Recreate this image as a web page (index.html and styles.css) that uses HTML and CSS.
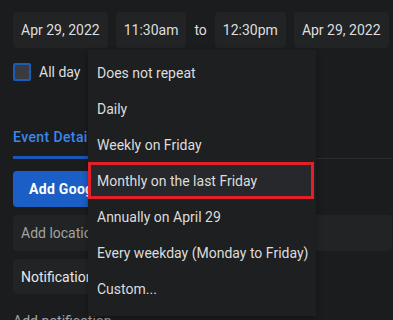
FILE: index.html
```html
<!DOCTYPE html>
<html lang="en">
<head>
    <meta charset="UTF-8">
    <meta name="viewport" content="width=device-width, initial-scale=1.0">
    <title>Event</title>
    <link rel="stylesheet" href="styles.css">
</head>
<body>
    <div class="page">
        <div class="time-row">
            <div class="field">Apr 29, 2022</div>
            <div class="field">11:30am</div>
            <span class="to">to</span>
            <div class="field">12:30pm</div>
            <div class="field">Apr 29, 2022</div>
        </div>

        <label class="allday">
            <span class="checkbox"></span>
            <span>All day</span>
        </label>

        <div class="tabs">
            <div class="tab active">Event Details</div>
        </div>

        <button class="meet-btn">Add Google Meet video conferencing</button>

        <div class="field location">Add location</div>
        <div class="field notification">Notification</div>
        <div class="add-notif">Add notification</div>
    </div>

    <ul class="repeat-menu">
        <li>Does not repeat</li>
        <li>Daily</li>
        <li>Weekly on Friday</li>
        <li class="selected">Monthly on the last Friday</li>
        <li>Annually on April 29</li>
        <li>Every weekday (Monday to Friday)</li>
        <li>Custom...</li>
    </ul>
</body>
</html>
```

FILE: styles.css
```css
* {
    margin: 0;
    padding: 0;
    box-sizing: border-box;
}

body {
    background-color: #1b1c1e;
    color: #e3e3e3;
    font-family: Roboto, "Noto Sans", sans-serif;
    font-size: 14px;
    line-height: 16px;
    height: 320px;
    overflow: hidden;
}

.page {
    padding: 12px 1px 0 13px;
}

.time-row {
    display: flex;
    align-items: center;
    gap: 8px;
}

.field {
    display: flex;
    align-items: center;
    height: 36px;
    padding: 0 8px;
    background-color: #212325;
    border-radius: 4px;
    color: #dedede;
}

.to {
    color: #dedede;
}

/* Toute la journée */
.allday {
    display: flex;
    align-items: center;
    gap: 8px;
    height: 32px;
    margin-top: 8px;
    color: #dedede;
}

.checkbox {
    width: 18px;
    height: 18px;
    border: 2px solid #1b5cb8;
    border-radius: 2px;
    background-color: #3a3b3e;
}

/* Onglets */
.tabs {
    display: flex;
    margin-top: 28px;
    border-bottom: 1px solid #2b2c2f;
}

.tab {
    padding: 13px 0 11px;
    margin-bottom: -1px;
    font-weight: 500;
    letter-spacing: 0.4px;
}

.tab.active {
    color: #3b87ee;
    border-bottom: 3px solid #1a56b4;
}

.meet-btn {
    display: block;
    height: 36px;
    margin-top: 12px;
    padding: 0 16px;
    border: none;
    border-radius: 4px;
    background-color: #1b5ec6;
    color: #fff;
    font-family: inherit;
    font-size: 14px;
    font-weight: 700;
    letter-spacing: 0.3px;
}

.location {
    margin-top: 8px;
    color: #a3a3a3;
}

.notification {
    width: 150px;
    height: 35px;
    margin-top: 8px;
    color: #e8e8e8;
}

.add-notif {
    margin-top: 19px;
    color: #a3a3a3;
}

/* Menu de répétition */
.repeat-menu {
    position: absolute;
    left: 88px;
    top: 50px;
    width: 228px;
    height: 266px;
    padding: 5px 0 9px;
    list-style: none;
    background-color: #1e1f21;
    box-shadow: 0 2px 6px rgba(0, 0, 0, 0.35);
}

.repeat-menu li {
    display: flex;
    align-items: center;
    height: 36px;
    padding-left: 9px;
    color: #dcdcdc;
}

.repeat-menu li.selected {
    height: 37px;
    margin-top: -1px;
    margin-right: 2px;
    padding-left: 6px;
    background-color: #27282b;
    border: 3px solid #e3202a;
}
```
